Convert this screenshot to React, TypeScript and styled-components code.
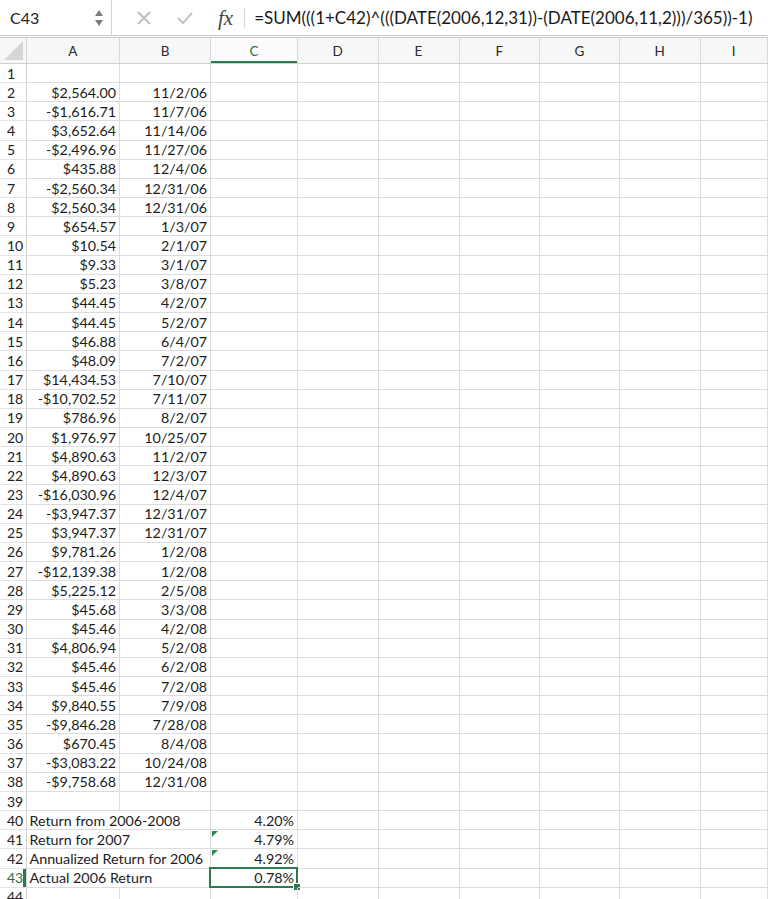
import React from 'react';
import styled, { createGlobalStyle } from 'styled-components';

const GlobalStyle = createGlobalStyle`
  html, body {
    margin: 0;
    padding: 0;
    background: #ffffff;
    overflow: hidden;
  }
  body {
    font-family: Lato, "Open Sans", "Liberation Sans", sans-serif;
    color: #1f1f1f;
  }
`;

const COLS = '26.5px 93.5px 91px 87px 80.5px 81px 80.5px 80px 80.5px 1fr';
const ROW_H = 19.17;

const rows: Array<[string, string]> = [
  ['', ''],
  ['$2,564.00', '11/2/06'],
  ['-$1,616.71', '11/7/06'],
  ['$3,652.64', '11/14/06'],
  ['-$2,496.96', '11/27/06'],
  ['$435.88', '12/4/06'],
  ['-$2,560.34', '12/31/06'],
  ['$2,560.34', '12/31/06'],
  ['$654.57', '1/3/07'],
  ['$10.54', '2/1/07'],
  ['$9.33', '3/1/07'],
  ['$5.23', '3/8/07'],
  ['$44.45', '4/2/07'],
  ['$44.45', '5/2/07'],
  ['$46.88', '6/4/07'],
  ['$48.09', '7/2/07'],
  ['$14,434.53', '7/10/07'],
  ['-$10,702.52', '7/11/07'],
  ['$786.96', '8/2/07'],
  ['$1,976.97', '10/25/07'],
  ['$4,890.63', '11/2/07'],
  ['$4,890.63', '12/3/07'],
  ['-$16,030.96', '12/4/07'],
  ['-$3,947.37', '12/31/07'],
  ['$3,947.37', '12/31/07'],
  ['$9,781.26', '1/2/08'],
  ['-$12,139.38', '1/2/08'],
  ['$5,225.12', '2/5/08'],
  ['$45.68', '3/3/08'],
  ['$45.46', '4/2/08'],
  ['$4,806.94', '5/2/08'],
  ['$45.46', '6/2/08'],
  ['$45.46', '7/2/08'],
  ['$9,840.55', '7/9/08'],
  ['-$9,846.28', '7/28/08'],
  ['$670.45', '8/4/08'],
  ['-$3,083.22', '10/24/08'],
  ['-$9,758.68', '12/31/08'],
  ['', ''],
];

const results = [
  { label: 'Return from 2006-2008', value: '4.20%', flag: false },
  { label: 'Return for 2007', value: '4.79%', flag: true },
  { label: 'Annualized Return for 2006', value: '4.92%', flag: true },
  { label: 'Actual 2006 Return', value: '0.78%', flag: false, selected: true },
];

const Page = styled.div`
  width: 768px;
  height: 899px;
  overflow: hidden;
  background: #ffffff;
`;

const FormulaBar = styled.div`
  height: 35px;
  display: flex;
  align-items: center;
  border-bottom: 3px double #c9c9c9;
  background: #ffffff;
`;

const NameBox = styled.div`
  width: 112px;
  height: 100%;
  box-sizing: border-box;
  display: flex;
  align-items: center;
  justify-content: space-between;
  padding: 0 8px 0 10px;
  border-right: 1px solid #d4d4d4;
  font-size: 16px;
  color: #222;
`;

const Spinner = styled.div`
  display: flex;
  flex-direction: column;
  gap: 4px;
`;

const Tri = styled.span<{ $down?: boolean }>`
  width: 0;
  height: 0;
  border-left: 4px solid transparent;
  border-right: 4px solid transparent;
  ${(p) => (p.$down ? 'border-top: 6px solid #7a7a7a;' : 'border-bottom: 6px solid #7a7a7a;')}
`;

const Tools = styled.div`
  display: flex;
  align-items: center;
  gap: 24px;
  padding-left: 24px;
  height: 100%;
`;

const Fx = styled.span`
  font-family: "Liberation Serif", serif;
  font-style: italic;
  font-size: 21px;
  color: #444;
  padding-right: 11px;
  border-right: 1px solid #d4d4d4;
  line-height: 20px;
`;

const Formula = styled.div`
  padding-left: 9px;
  font-size: 17px;
  color: #1a1a1a;
  white-space: nowrap;
`;

const HeaderRow = styled.div`
  display: grid;
  grid-template-columns: ${COLS};
  height: 26px;
  background: #f7f7f7;
  border-bottom: 1px solid #cfcfcf;
  box-sizing: border-box;
`;

const Corner = styled.div`
  position: relative;
  border-right: 1px solid #d4d4d4;
  &::after {
    content: '';
    position: absolute;
    right: 3px;
    bottom: 3px;
    width: 0;
    height: 0;
    border-left: 19px solid transparent;
    border-bottom: 19px solid #d6d6d6;
  }
`;

const ColHead = styled.div<{ $active?: boolean }>`
  display: flex;
  align-items: center;
  justify-content: center;
  font-size: 13.5px;
  color: ${(p) => (p.$active ? '#2a7046' : '#2b2b2b')};
  border-right: 1px solid #d9d9d9;
  box-shadow: ${(p) => (p.$active ? 'inset 0 -2px 0 #2f7a4a' : 'none')};
  background: ${(p) => (p.$active ? '#fbfbfb' : 'transparent')};
`;

const Row = styled.div`
  display: grid;
  grid-template-columns: ${COLS};
  height: ${ROW_H}px;
`;

const RowHead = styled.div<{ $active?: boolean }>`
  display: flex;
  align-items: center;
  padding-left: 7px;
  font-size: 14px;
  color: ${(p) => (p.$active ? '#2a7046' : '#222')};
  background: #ffffff;
  border-right: 1px solid #d4d4d4;
  border-bottom: 1px solid #e3e3e3;
  box-shadow: ${(p) => (p.$active ? 'inset -3px 0 0 #2f7a4a' : 'none')};
  overflow: hidden;
`;

const Cell = styled.div<{ $align?: 'left' | 'right'; $span?: number }>`
  position: relative;
  display: flex;
  align-items: center;
  justify-content: ${(p) => (p.$align === 'left' ? 'flex-start' : 'flex-end')};
  padding: 0 3px;
  font-size: 14.3px;
  white-space: nowrap;
  color: #1c1c1c;
  border-right: 1px solid #dcdcdc;
  border-bottom: 1px solid #dcdcdc;
  grid-column: span ${(p) => p.$span ?? 1};
  overflow: visible;
`;

const Flag = styled.span`
  position: absolute;
  left: 1px;
  top: 1px;
  width: 0;
  height: 0;
  border-top: 6px solid #2f8a4e;
  border-right: 6px solid transparent;
`;

const Selection = styled.span`
  position: absolute;
  left: -2px;
  top: -2px;
  right: -1px;
  bottom: -1px;
  border: 2px solid #2f7a4a;
  pointer-events: none;
  &::after {
    content: '';
    position: absolute;
    right: -5px;
    bottom: -5px;
    width: 6px;
    height: 6px;
    background: #2f7a4a;
    border: 1px solid #ffffff;
  }
`;

const letters = ['A', 'B', 'C', 'D', 'E', 'F', 'G', 'H', 'I'];

function EmptyCells({ from }: { from: number }) {
  return (
    <>
      {letters.slice(from).map((l) => (
        <Cell key={l} />
      ))}
    </>
  );
}

export default function App() {
  return (
    <Page>
      <GlobalStyle />
      <FormulaBar>
        <NameBox>
          <span>C43</span>
          <Spinner>
            <Tri />
            <Tri $down />
          </Spinner>
        </NameBox>
        <Tools>
          <svg width="16" height="16" viewBox="0 0 16 16">
            <path d="M2 2 L14 14 M14 2 L2 14" stroke="#bdbdbd" strokeWidth="2" fill="none" />
          </svg>
          <svg width="18" height="16" viewBox="0 0 18 16">
            <path d="M2 8 L7 13 L16 3" stroke="#c4c4c4" strokeWidth="2" fill="none" />
          </svg>
          <Fx>fx</Fx>
        </Tools>
        <Formula>=SUM(((1+C42)^(((DATE(2006,12,31))-(DATE(2006,11,2)))/365))-1)</Formula>
      </FormulaBar>

      <HeaderRow>
        <Corner />
        {letters.map((l) => (
          <ColHead key={l} $active={l === 'C'}>
            {l}
          </ColHead>
        ))}
      </HeaderRow>

      {rows.map(([a, b], i) => (
        <Row key={i}>
          <RowHead>{i + 1}</RowHead>
          <Cell>{a}</Cell>
          <Cell>{b}</Cell>
          <EmptyCells from={2} />
        </Row>
      ))}

      {results.map((r, i) => (
        <Row key={r.label}>
          <RowHead $active={r.selected}>{40 + i}</RowHead>
          <Cell $align="left" $span={2}>
            {r.label}
          </Cell>
          <Cell>
            {r.flag && <Flag />}
            {r.value}
            {r.selected && <Selection />}
          </Cell>
          <EmptyCells from={3} />
        </Row>
      ))}

      <Row>
        <RowHead>44</RowHead>
        <EmptyCells from={0} />
      </Row>
    </Page>
  );
}
